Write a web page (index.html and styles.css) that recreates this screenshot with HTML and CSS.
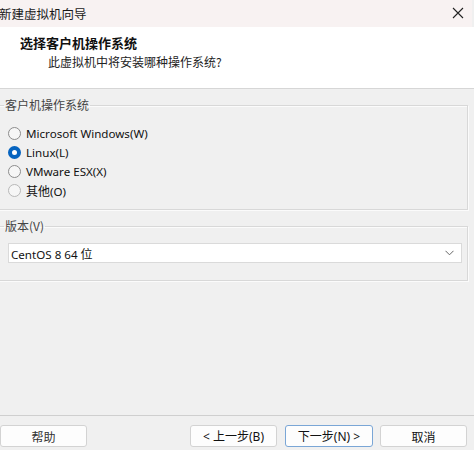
FILE: index.html
```html
<!DOCTYPE html>
<html lang="zh-CN">
<head>
<meta charset="utf-8">
<title>新建虚拟机向导</title>
<link rel="stylesheet" href="styles.css">
</head>
<body>
<div class="window">
  <div class="titlebar">
    <span class="title">新建虚拟机向导</span>
    <svg class="close" width="12" height="12" viewBox="0 0 12 12"><path d="M1 1 L11 11 M11 1 L1 11" stroke="#222" stroke-width="1.1" fill="none"/></svg>
  </div>
  <div class="header">
    <div class="h-title">选择客户机操作系统</div>
    <div class="h-sub">此虚拟机中将安装哪种操作系统?</div>
  </div>
  <div class="main">
    <fieldset class="group group-os">
      <legend class="legend">客户机操作系统</legend>
      <div class="radios">
        <div class="radio-row"><span class="radio"></span><span class="rlabel">Microsoft Windows(W)</span></div>
        <div class="radio-row"><span class="radio checked"></span><span class="rlabel">Linux(L)</span></div>
        <div class="radio-row"><span class="radio"></span><span class="rlabel">VMware ESX(X)</span></div>
        <div class="radio-row"><span class="radio dim"></span><span class="rlabel"><span class="cjk">其他</span>(O)</span></div>
      </div>
    </fieldset>
    <fieldset class="group group-ver">
      <legend class="legend"><span class="cjk">版本</span>(V)</legend>
      <div class="select">
        <span class="sel-text">CentOS 8 64 <span class="cjk">位</span></span>
        <svg class="chev" width="9" height="6" viewBox="0 0 9 6"><path d="M0.5 0.8 L4.5 4.8 L8.5 0.8" stroke="#666" stroke-width="1" fill="none"/></svg>
      </div>
    </fieldset>
  </div>
  <div class="footer">
    <button class="btn btn-help"><span class="blabel cjk">帮助</span></button>
    <div class="nav">
      <button class="btn"><span class="blabel">&lt; <span class="cjk">上一步</span>(B)</span></button>
      <button class="btn btn-default"><span class="blabel"><span class="cjk">下一步</span>(N) &gt;</span></button>
      <button class="btn btn-cancel"><span class="blabel cjk">取消</span></button>
    </div>
  </div>
</div>
</body>
</html>
```
FILE: styles.css
```css
* { box-sizing: border-box; }
html, body { margin: 0; padding: 0; }
body {
  width: 474px;
  height: 450px;
  overflow: hidden;
  background: #f0f0f0;
  font-family: "Noto Sans", "Noto Sans CJK SC", sans-serif;
  font-size: 12px;
  color: #111;
}
.window {
  display: flex;
  flex-direction: column;
  height: 450px;
}
.titlebar {
  height: 27px;
  background: #f8f2f2;
  display: flex;
  align-items: center;
  justify-content: space-between;
  padding: 0 8px 1px 0;
  margin-right: 2px;
}
.title {
  font-family: "Noto Sans CJK SC", sans-serif;
  font-size: 12.5px;
  color: #1a1a1a;
  margin-left: -1px;
}
.header {
  background: #fff;
  height: 62px;
  border-bottom: 1px solid #d6d6d6;
  padding-top: 8px;
}
.h-title {
  font-family: "Noto Sans CJK SC", sans-serif;
  font-weight: bold;
  font-size: 13px;
  line-height: 16px;
  margin-left: 20px;
}
.h-sub {
  font-family: "Noto Sans CJK SC", sans-serif;
  font-size: 12px;
  line-height: 16px;
  margin-left: 48px;
  margin-top: 3px;
  color: #222;
}
.cjk { font-family: "Noto Sans CJK SC", sans-serif; }
.main {
  flex: 1;
  display: flex;
  flex-direction: column;
}
.group {
  margin: 0 6px 0 -3px;
  border: 1px solid #d8d8d8;
  box-shadow: inset 1px 1px 0 #fbfbfb, 1px 1px 0 #fbfbfb;
  min-width: 0;
}
.legend {
  font-family: "Noto Sans CJK SC", sans-serif;
  font-size: 12px;
  line-height: 16px;
  color: #444;
  padding: 0 1px;
  margin-left: -4px;
}
.group-os {
  margin-top: 8px;
  padding: 11px 0 9px 10px;
}
.radios {
  display: flex;
  flex-direction: column;
}
.radio-row {
  height: 19px;
  display: flex;
  align-items: center;
  gap: 5px;
}
.radio {
  width: 13px;
  height: 13px;
  border-radius: 50%;
  border: 1px solid #8c8c8c;
  background: #f6f6f6;
  flex: none;
}
.radio.dim { border-color: #b8b8b8; }
.radio.checked {
  border: 4px solid #0664c0;
  background: #fff;
}
.rlabel { color: #111; font-size: 11.6px; }
.rlabel .cjk { font-size: 12px; }
.group-ver {
  margin-top: 8px;
  padding: 9px 5px 17px 10px;
}
.select {
  height: 20px;
  background: #fff;
  border: 1px solid #dadada;
  display: flex;
  align-items: center;
  justify-content: space-between;
  padding: 0 7px 0 2px;
}
.sel-text { color: #111; font-size: 11.6px; }
.sel-text .cjk { font-size: 12px; }
.footer {
  border-top: 1px solid #cfcfcf;
  height: 36px;
  display: flex;
  justify-content: space-between;
  align-items: flex-start;
  padding: 9px 7px 0 0;
  margin-bottom: -1px;
}
.nav {
  display: flex;
  gap: 8px;
}
.btn {
  width: 87px;
  height: 22px;
  border: 1px solid #d3d3d3;
  border-radius: 3px;
  background: #fdfdfd;
  font-family: "Noto Sans", "Noto Sans CJK SC", sans-serif;
  font-size: 12px;
  color: #111;
  padding: 0;
  display: flex;
  align-items: center;
  justify-content: center;
}
.blabel { white-space: pre; }
.btn-help { color: #333; }
.btn-default { border-color: #7aa6d6; width: 88px; }
.btn-cancel { margin-left: -1px; }
```
